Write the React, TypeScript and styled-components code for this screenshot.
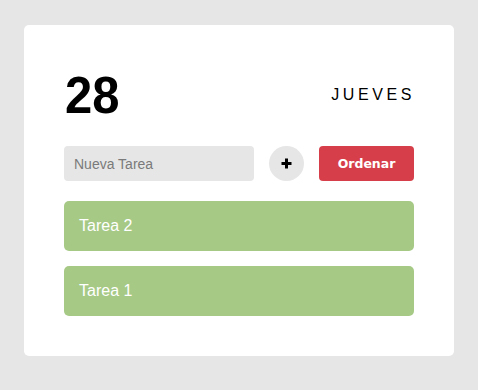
import React from "react";
import styled, { createGlobalStyle } from "styled-components";

const Global = createGlobalStyle`
  html, body { margin: 0; padding: 0; background: #e6e6e6; }
  body { font-family: "Liberation Sans", Arial, sans-serif; }
  * { box-sizing: border-box; }
`;

const Page = styled.div`
  padding: 25px 24px;
  height: 390px;
`;

const Card = styled.div`
  background: #ffffff;
  border-radius: 5px;
  width: 430px;
  height: 331px;
  padding: 40px;
  display: flex;
  flex-direction: column;
`;

const Header = styled.div`
  display: flex;
  align-items: center;
  justify-content: space-between;
  height: 61px;
`;

const DayNumber = styled.div`
  font-family: "Liberation Sans", Arial, sans-serif;
  font-weight: bold;
  font-size: 49px;
  color: #000;
  line-height: 1;
  margin-left: 1px;
  transform: scaleY(1.06);
`;

const DayName = styled.div`
  font-family: "Liberation Sans", Arial, sans-serif;
  font-size: 16px;
  letter-spacing: 3.6px;
  margin-right: -1px;
  color: #000;
`;

const Controls = styled.div`
  display: flex;
  align-items: center;
  gap: 15px;
  margin-top: 21px;
  height: 35px;
`;

const Input = styled.input`
  width: 190px;
  height: 35px;
  border: none;
  outline: none;
  background: #e6e6e6;
  border-radius: 4px;
  padding: 0 10px;
  font-family: "Liberation Sans", Arial, sans-serif;
  font-size: 14px;
  color: #333;
  &::placeholder { color: #7a7a7a; }
`;

const RoundButton = styled.button`
  width: 35px;
  height: 35px;
  border-radius: 50%;
  border: none;
  background: #e6e6e6;
  display: flex;
  align-items: center;
  justify-content: center;
  padding: 0;
`;

const SortButton = styled.button`
  width: 95px;
  height: 35px;
  border: none;
  border-radius: 4px;
  background: #d63f4a;
  color: #fff;
  font-family: "DejaVu Sans", Verdana, sans-serif;
  font-weight: bold;
  font-size: 12.5px;
  padding: 0;
`;

const List = styled.div`
  display: flex;
  flex-direction: column;
  gap: 15px;
  margin-top: 20px;
`;

const Task = styled.div`
  height: 50px;
  background: #a6c985;
  border-radius: 5px;
  color: #fff;
  font-family: "Liberation Sans", Arial, sans-serif;
  font-size: 16px;
  display: flex;
  align-items: center;
  padding: 0 15px;
`;

export default function App() {
  const tasks = ["Tarea 2", "Tarea 1"];
  return (
    <>
      <Global />
      <Page>
        <Card>
          <Header>
            <DayNumber>28</DayNumber>
            <DayName>JUEVES</DayName>
          </Header>
          <Controls>
            <Input placeholder="Nueva Tarea" />
            <RoundButton aria-label="Agregar">
              <svg width="11" height="11" viewBox="0 0 11 11">
                <path d="M5.5 0.5V10.5M0.5 5.5H10.5" stroke="#000" strokeWidth="3" />
              </svg>
            </RoundButton>
            <SortButton>Ordenar</SortButton>
          </Controls>
          <List>
            {tasks.map((t) => (
              <Task key={t}>{t}</Task>
            ))}
          </List>
        </Card>
      </Page>
    </>
  );
}
